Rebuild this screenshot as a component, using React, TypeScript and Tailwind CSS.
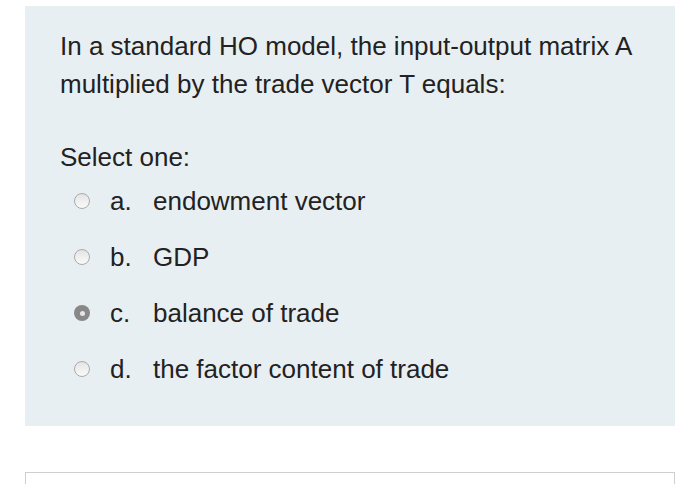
const options = [
  { letter: 'a.', text: 'endowment vector', checked: false },
  { letter: 'b.', text: 'GDP', checked: false },
  { letter: 'c.', text: 'balance of trade', checked: true },
  { letter: 'd.', text: 'the factor content of trade', checked: false },
];

function Radio({ checked }: { checked: boolean }) {
  if (checked) {
    return (
      <span className="flex h-[16px] w-[16px] items-center justify-center rounded-full bg-[#888888]">
        <span className="h-[5px] w-[5px] rounded-full bg-[#e6e6e6]" />
      </span>
    );
  }
  return (
    <span className="h-[16px] w-[16px] rounded-full border border-[#a9a9a9] bg-gradient-to-b from-[#e4e4e4] to-[#fafafa]" />
  );
}

export default function App() {
  return (
    <div
      className="h-[484px] w-[700px] overflow-hidden bg-white pt-[6px] text-[#222222]"
      style={{ fontFamily: '"Liberation Sans", Arial, sans-serif' }}
    >
      <div className="mx-[25px] h-[420px] bg-[#e8eff3] pl-[35px] pt-[21px]">
        <p className="text-[26px] leading-[38px]">
          In a standard HO model, the input-output matrix A
          <br />
          multiplied by the trade vector T equals:
        </p>
        <p className="mt-[35px] text-[26px] leading-[38px]">Select one:</p>
        <div className="mt-[6px] flex flex-col gap-[18px]">
          {options.map((o) => (
            <div key={o.letter} className="flex h-[38px] items-center text-[26px]">
              <span className="ml-[14px] mr-[20px] flex items-center">
                <Radio checked={o.checked} />
              </span>
              <span className="w-[43px]">{o.letter}</span>
              <span>{o.text}</span>
            </div>
          ))}
        </div>
      </div>
      <div className="mx-[25px] mt-[46px] h-[40px] border border-[#cfcfcf]" />
    </div>
  );
}
